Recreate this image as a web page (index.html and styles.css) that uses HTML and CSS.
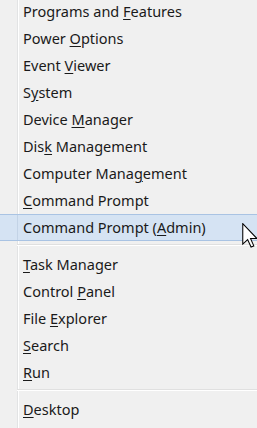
FILE: index.html
```html
<!DOCTYPE html>
<html lang="en">
<head>
  <meta charset="UTF-8" />
  <title>Quick Link Menu</title>
  <link rel="stylesheet" href="styles.css">
</head>
<body>
  <div class="menu">
    <div class="item">Programs and <u>F</u>eatures</div>
    <div class="item">Power <u>O</u>ptions</div>
    <div class="item">Event <u>V</u>iewer</div>
    <div class="item">S<u>y</u>stem</div>
    <div class="item">Device <u>M</u>anager</div>
    <div class="item">Dis<u>k</u> Management</div>
    <div class="item">Computer Mana<u>g</u>ement</div>
    <div class="item"><u>C</u>ommand Prompt</div>
    <div class="item active">Command Prompt (<u>A</u>dmin)</div>
    <div class="sep"></div>
    <div class="item"><u>T</u>ask Manager</div>
    <div class="item">Control <u>P</u>anel</div>
    <div class="item">File <u>E</u>xplorer</div>
    <div class="item"><u>S</u>earch</div>
    <div class="item"><u>R</u>un</div>
    <div class="sep"></div>
    <div class="item"><u>D</u>esktop</div>
  </div>

  <svg class="cursor" width="16" height="25" viewBox="0 0 12 19">
    <path d="M0.5 0.5 L0.5 16 L4.2 12.6 L6.8 18.3 L8.9 17.4 L6.4 11.8 L11.3 11.8 Z" fill="#fff" stroke="#000" stroke-width="0.8" stroke-linejoin="miter" />
  </svg>
</body>
</html>
```

FILE: styles.css
```css
* {
  box-sizing: border-box;
}
body {
  margin: 0;
  background: #f0f0f0;
  font-family: 'Noto Sans', 'Open Sans', sans-serif;
  height: 100vh;
  overflow: hidden;
  position: relative;
}

.menu {
  margin-top: -2px;
  background: linear-gradient(to right, transparent 17px, #e2e3e4 17px, #e2e3e4 18px, #fff 18px, #fff 19px, transparent 19px);
  min-height: 440px;
}

.item {
  height: 27px;
  line-height: 27px;
  padding-left: 23px;
  font-size: 14.5px;
  color: #1a1a1a;
  white-space: nowrap;
}

.item u {
  text-underline-offset: 2px;
}

.item.active {
  background: linear-gradient(to right, transparent 17px, #c3d3e6 17px, #c3d3e6 18px, transparent 18px), #d5e3f3;
  border-top: 1px solid #a9c3e3;
  border-bottom: 1px solid #a9c3e3;
  line-height: 25px;
}

.sep {
  margin: 3px 0 5px 17px;
  border-top: 1px solid #e0e0e0;
  border-bottom: 1px solid #fff;
}

.cursor {
  position: absolute;
  left: 242px;
  top: 223px;
}
```
